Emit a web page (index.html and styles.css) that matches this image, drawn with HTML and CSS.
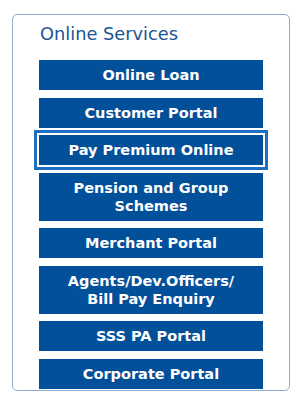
FILE: index.html
```html
<!DOCTYPE html>
<html lang="en">
<head>
    <meta charset="UTF-8">
    <meta name="viewport" content="width=device-width, initial-scale=1.0">
    <title>Online Services</title>
    <link rel="stylesheet" href="styles.css">
</head>
<body>

    <div class="services-box">
        <h2>Online Services</h2>

        <ul class="service-list">
            <li><a href="#">Online Loan</a></li>
            <li><a href="#">Customer Portal</a></li>
            <li><a href="#" class="focused">Pay Premium Online</a></li>
            <li><a href="#">Pension and Group<br>Schemes</a></li>
            <li><a href="#">Merchant Portal</a></li>
            <li><a href="#">Agents/Dev.Officers/<br>Bill Pay Enquiry</a></li>
            <li><a href="#">SSS PA Portal</a></li>
            <li><a href="#">Corporate Portal</a></li>
        </ul>
    </div>

</body>
</html>
```

FILE: styles.css
```css
body {
    margin: 0;
    padding: 0;
    background: #fff;
    font-family: "DejaVu Sans", Verdana, sans-serif;
}

.services-box {
    margin: 14px 0 0 12px;
    width: 278px;
    height: 377px;
    box-sizing: border-box;
    border: 1px solid #8aaed4;
    border-radius: 5px;
    padding: 0 26px;
    overflow: hidden;
}

.services-box h2 {
    margin: 8px 0 0 1px;
    font-size: 17.8px;
    font-weight: normal;
    line-height: 22px;
    color: #1d5493;
}

.service-list {
    list-style: none;
    margin: 15px 0 0 0;
    padding: 0;
}

.service-list li {
    margin-bottom: 7.5px;
}

.service-list a {
    display: block;
    background-color: #03509a;
    color: #fff;
    text-decoration: none;
    text-align: center;
    font-weight: bold;
    font-size: 14.5px;
    line-height: 18px;
    padding: 6px 4px;
}

/* keyboard focus ring */
.service-list a.focused {
    outline: 3px solid #1c6fc2;
    outline-offset: 2px;
}
```
